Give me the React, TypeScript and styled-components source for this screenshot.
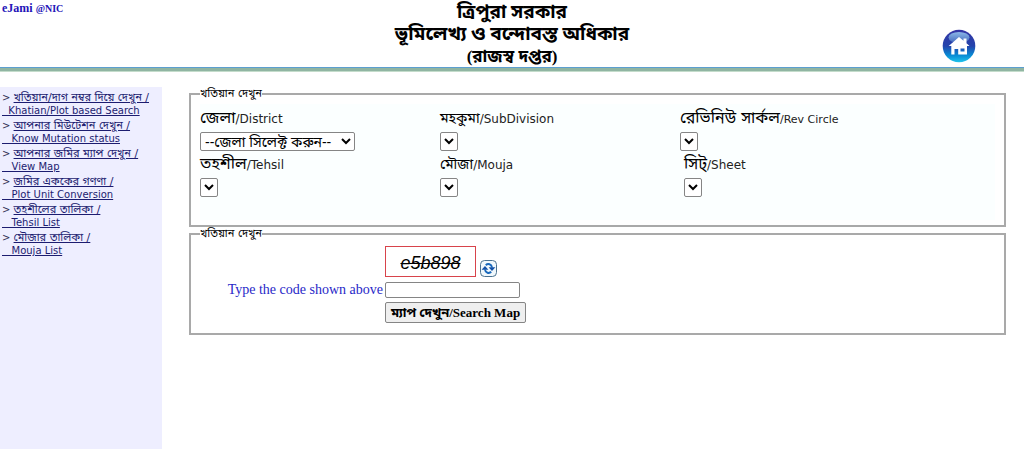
import React from "react";
import styled, { createGlobalStyle } from "styled-components";

const GlobalStyle = createGlobalStyle`
  * { box-sizing: border-box; }
  html, body, #root { min-height: 100vh; }
  body {
    margin: 0;
    background: #fff;
    color: #000;
    font-family: "DejaVu Sans", "Noto Sans Bengali", sans-serif;
    font-size: 10px;
  }
  #root { display: flex; flex-direction: column; }
`;

const Header = styled.header`
  display: grid;
  grid-template-columns: 1fr auto 1fr;
  height: 67px;
  flex: none;
`;

const Brand = styled.div`
  padding: 1px 2px;
  font: bold 12px/14px "Liberation Serif", serif;
  color: #2414b8;
`;

const BrandOwner = styled.span`
  font-size: 10px;
`;

const Title = styled.h1`
  margin: 0;
  padding-top: 1px;
  text-align: center;
  font: bold 19px/22px "Liberation Serif", "Noto Sans Bengali", serif;
`;

const Department = styled.span`
  font-size: 17px;
`;

const HomeLink = styled.a`
  justify-self: end;
  align-self: end;
  display: block;
  margin: 0 48px 5px 0;
  width: 34px;
  height: 34px;
`;

const Rule = styled.div`
  height: 5px;
  flex: none;
  background: #90b5a2;
  border-top: 1px solid #5c9fd0;
  border-bottom: 1px solid #c4dccb;
`;

const Body = styled.div`
  display: flex;
  flex: 1;
  padding-top: 15px;
`;

const Sidebar = styled.nav`
  width: 162px;
  flex: none;
  padding: 4px 2px;
  background: #eeeeff;
`;

const Menu = styled.ul`
  margin: 0;
  padding: 0;
  list-style: none;
`;

const MenuItem = styled.li`
  height: 28px;
  line-height: 12px;
  white-space: nowrap;
  color: #333355;
`;

const MenuLink = styled.a`
  color: #1c1c70;
  text-decoration: underline;
`;

const MenuNative = styled.span`
  font-size: 11px;
  line-height: 14px;
`;

const Main = styled.main`
  flex: 1;
  min-width: 0;
  padding: 0 18px 0 27px;
`;

const Panel = styled.fieldset<{ $bottom: number }>`
  margin: 0;
  padding: 3px 9px ${(p) => p.$bottom}px;
  border: 2px solid #a9a9a9;
`;

const PanelTitle = styled.legend`
  padding: 0;
  height: 14px;
  line-height: 14px;
  font-size: 11px;
`;

const Fields = styled.div`
  display: grid;
  grid-template-columns: minmax(240px, 30%) minmax(240px, 30%) 1fr;
  height: 116px;
  align-content: start;
  background: #fbffff;
`;

const Field = styled.div<{ $indent?: boolean }>`
  display: flex;
  flex-direction: column;
  align-items: flex-start;
  height: 46px;
  padding-left: ${(p) => (p.$indent ? 4 : 0)}px;
`;

const FieldLabel = styled.label<{ $size: number }>`
  height: 28px;
  line-height: 28px;
  font-size: ${(p) => p.$size}px;
  white-space: nowrap;
  color: #222;
`;

const Native = styled.span<{ $size: number }>`
  font-size: ${(p) => p.$size}px;
  color: #000;
`;

const Select = styled.select<{ $wide?: boolean }>`
  flex: none;
  width: ${(p) => (p.$wide ? 155 : 18)}px;
  height: 19px;
  margin: 0;
  padding: 0;
  border: 1px solid #858585;
  border-radius: 2px;
  background-color: #fff;
  color: #000;
  font: 14px "Liberation Sans", "Noto Sans Bengali", sans-serif;
`;

const SearchForm = styled.form`
  display: grid;
  grid-template-columns: 183px 1fr;
  column-gap: 2px;
  align-items: center;
`;

const CaptchaRow = styled.div`
  grid-column: 2;
  display: flex;
  align-items: flex-end;
  gap: 4px;
  height: 34px;
  padding-bottom: 1px;
`;

const Captcha = styled.div`
  width: 91px;
  height: 31px;
  border: 1px solid #d8434b;
  text-align: center;
  font: italic 18px/32px "Liberation Sans", sans-serif;
  text-decoration: line-through;
`;

const RefreshButton = styled.button`
  width: 17px;
  height: 17px;
  padding: 0;
  border: 0;
  background: none;
  svg { display: block; }
`;

const CodeLabel = styled.label`
  text-align: right;
  white-space: nowrap;
  font: 14px/24px "Liberation Serif", serif;
  color: #2828c8;
`;

const CodeInput = styled.input`
  width: 135px;
  height: 16px;
  border: 1px solid #858585;
  border-radius: 2px;
  padding: 1px 2px;
`;

const SearchButton = styled.button`
  grid-column: 2;
  justify-self: start;
  height: 21px;
  padding: 0 5px;
  border: 1px solid #858585;
  border-radius: 2px;
  background: #efefef;
  white-space: nowrap;
  font: bold 13px/18px "Liberation Serif", "Noto Sans Bengali", serif;
`;

const menu = [
  ["খতিয়ান/দাগ নম্বর দিয়ে দেখুন /", "\u00a0\u00a0Khatian/Plot based Search"],
  ["আপনার মিউটেশন দেখুন /", "\u00a0\u00a0\u00a0Know Mutation status"],
  ["আপনার জমির ম্যাপ দেখুন /", "\u00a0\u00a0\u00a0View Map"],
  ["জমির এককের গণণা /", "\u00a0\u00a0\u00a0Plot Unit Conversion"],
  ["তহশীলের তালিকা /", "\u00a0\u00a0\u00a0Tehsil List"],
  ["মৌজার তালিকা /", "\u00a0\u00a0\u00a0Mouja List"],
];

const fields = [
  { id: "district", native: "জেলা", size: 16, label: "/District", latin: 12, option: "--জেলা সিলেক্ট করুন--" },
  { id: "subdivision", native: "মহকুমা", size: 14, label: "/SubDivision", latin: 12 },
  { id: "circle", native: "রেভিনিউ সার্কল", size: 16, label: "/Rev Circle", latin: 11 },
  { id: "tehsil", native: "তহশীল", size: 16, label: "/Tehsil", latin: 12 },
  { id: "mouja", native: "মৌজা", size: 14, label: "/Mouja", latin: 12 },
  { id: "sheet", native: "সিট্", size: 16, label: "/Sheet", latin: 12, indent: true },
];

function HomeIcon() {
  return (
    <svg width="34" height="34" viewBox="0 0 34 34" aria-hidden="true">
      <defs>
        <linearGradient id="orb" x1="0" y1="0" x2="0" y2="1">
          <stop offset="0" stopColor="#3434a4" />
          <stop offset="0.5" stopColor="#2444ac" />
          <stop offset="0.78" stopColor="#088ad4" />
          <stop offset="1" stopColor="#20c4ec" />
        </linearGradient>
        <linearGradient id="gloss" x1="0" y1="0" x2="0" y2="1">
          <stop offset="0" stopColor="#8cb8e8" />
          <stop offset="1" stopColor="#4468bc" />
        </linearGradient>
      </defs>
      <circle cx="17" cy="17" r="16.3" fill="url(#orb)" />
      <ellipse cx="17" cy="8.5" rx="10.5" ry="5.5" fill="url(#gloss)" />
      <path
        fill="#fff"
        fillRule="evenodd"
        d="M17 8 L21.5 11.7 V9.5 H24.5 V14.2 L27.5 17 H25 V25.5 H16.2 V20 H12.5 V25.5 H9.3 V17 H6.7 Z M18.5 19.5 V22.5 H22.5 V19.5 Z"
      />
    </svg>
  );
}

function RefreshIcon() {
  return (
    <svg width="17" height="17" viewBox="0 0 17 17" aria-hidden="true">
      <rect x="0.5" y="0.5" width="16" height="16" rx="4" fill="#f0f8fc" stroke="#4c7290" />
      <g fill="none" stroke="#1868bc" strokeWidth="2">
        <path d="M5.8 5.2 C7.8 3.2 11.6 4 12 7.5" />
        <path d="M11.2 11.8 C9.2 13.8 5.4 13 5 9.5" />
      </g>
      <g fill="#1050a8">
        <path d="M8.6 7.2 H15.4 L12 11 Z" />
        <path d="M1.6 9.8 H8.4 L5 6 Z" />
      </g>
    </svg>
  );
}

export default function App() {
  return (
    <>
      <GlobalStyle />
      <Header>
        <Brand>
          eJami <BrandOwner>@NIC</BrandOwner>
        </Brand>
        <Title>
          ত্রিপুরা সরকার
          <br />
          ভূমিলেখ্য ও বন্দোবস্ত অধিকার
          <br />
          <Department>(রাজস্ব দপ্তর)</Department>
        </Title>
        <HomeLink href="#" aria-label="Home">
          <HomeIcon />
        </HomeLink>
      </Header>
      <Rule />
      <Body>
        <Sidebar>
          <Menu>
            {menu.map(([native, english]) => (
              <MenuItem key={english}>
                {"> "}
                <MenuLink href="#">
                  <MenuNative>{native}</MenuNative>
                  <br />
                  {english}
                </MenuLink>
              </MenuItem>
            ))}
          </Menu>
        </Sidebar>
        <Main>
          <Panel $bottom={5}>
            <PanelTitle>খতিয়ান দেখুন</PanelTitle>
            <Fields>
              {fields.map((f) => (
                <Field key={f.id} $indent={f.indent}>
                  <FieldLabel htmlFor={f.id} $size={f.latin}>
                    <Native $size={f.size}>{f.native}</Native>
                    {f.label}
                  </FieldLabel>
                  <Select id={f.id} $wide={Boolean(f.option)}>
                    {f.option && <option>{f.option}</option>}
                  </Select>
                </Field>
              ))}
            </Fields>
          </Panel>
          <Panel $bottom={10}>
            <PanelTitle>খতিয়ান দেখুন</PanelTitle>
            <SearchForm onSubmit={(e) => e.preventDefault()}>
              <CaptchaRow>
                <Captcha>e5b898</Captcha>
                <RefreshButton type="button" aria-label="Refresh code">
                  <RefreshIcon />
                </RefreshButton>
              </CaptchaRow>
              <CodeLabel htmlFor="code">Type the code shown above</CodeLabel>
              <CodeInput id="code" type="text" />
              <SearchButton type="submit">ম্যাপ দেখুন/Search Map</SearchButton>
            </SearchForm>
          </Panel>
        </Main>
      </Body>
    </>
  );
}
